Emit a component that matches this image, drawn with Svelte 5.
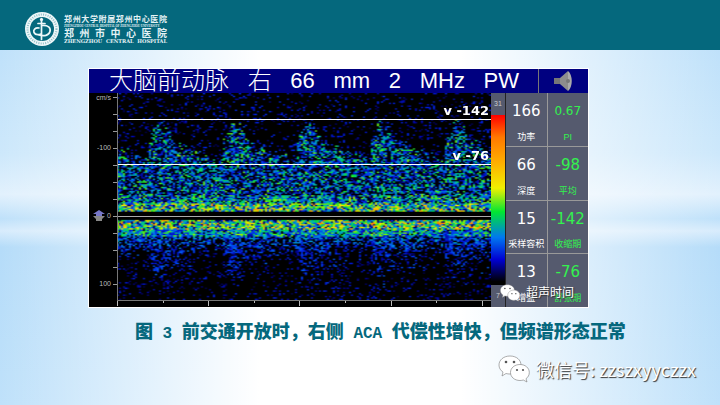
<script>
    import { onMount } from "svelte";

    const readings = [
        { value: "166", label: "功率" },
        { value: "0.67", label: "PI", result: true, small: true },
        { value: "66", label: "深度" },
        { value: "-98", label: "平均", result: true },
        { value: "15", label: "采样容积" },
        { value: "-142", label: "收缩期", result: true },
        { value: "13", label: "增益" },
        { value: "-76", label: "舒张期", result: true }
    ];

    const palette = [
        [0, 0, 0],
        [0, 0, 150],
        [0, 40, 235],
        [0, 115, 235],
        [0, 185, 175],
        [0, 225, 60],
        [150, 240, 0],
        [240, 235, 0],
        [255, 150, 0],
        [255, 40, 0]
    ];

    // samples in the spectrum, one sample is STEP units high
    const COLS = 187;
    const ROWS = 150;
    const STEP = 1.38;
    const PERIOD = 37;

    let canvas;

    function createRandom(seed) {
        return () => {
            seed = (seed * 1664525 + 1013904223) >>> 0;
            return seed / 4294967296;
        };
    }

    // 0..1 height of the pulse wave at a column
    function pulse(col) {
        const t = ((col - 16 + PERIOD) % PERIOD) / PERIOD;
        if (t < 0.07) return 0.6 + t * 5;
        if (t < 0.28) return 1 - Math.abs(t - 0.14) * 1.3;
        if (t < 0.85) return 0.56 - (t - 0.28) * 0.85;
        return 0.06;
    }

    function toColor(level) {
        const l = Math.max(0, Math.min(level, 0.999)) * (palette.length - 1);
        const i = Math.floor(l);
        return palette[i].map((c, k) => c + (palette[i + 1][k] - c) * (l - i));
    }

    function sampleLevel(y, col, random) {
        const wave = pulse(col);
        const r = random();
        const noise = random() < 0.12 ? 0.05 + r * 0.18 : 0;

        if (y > 118.5 && y < 126) return 0;

        if (y < 120) {
            const top = 69 - wave * 37 + (random() - 0.5) * 14;
            if (y < top) return noise;
            if (y > 110) return random() < 0.86 ? 0.2 + r * 0.7 : 0.08;
            if (y > 101) return random() < 0.76 ? 0.1 + r * 0.6 : 0.02;
            return random() < 0.58 ? 0.12 + r * r * r * 0.22 + r * 0.32 : 0.01;
        }

        const depth = y - 126;
        if (depth < 10) return random() < 0.86 ? 0.22 + r * 0.7 : 0.08;
        if (depth < 17 && random() < 0.76) return 0.12 + r * 0.56;
        const reach = 14 + wave * 20;
        const chance = 0.72 * Math.exp(-Math.pow(Math.max(0, depth - 11) / reach, 2));
        if (random() < chance) return 0.09 + r * 0.54 * Math.max(0.42, 1 - depth / 58);
        return noise * 0.9;
    }

    function drawSpectrum() {
        const ctx = canvas.getContext("2d");
        const image = ctx.createImageData(COLS, ROWS);
        const random = createRandom(142);

        for (let row = 0; row < ROWS; row++) {
            let last = 0;
            for (let col = 0; col < COLS; col++) {
                let level = sampleLevel(row * STEP, col, random);
                // neighbouring samples often belong to the same echo
                if (last > 0.1 && level > 0.1 && random() < 0.12) level = last;
                last = level;
                const [r, g, b] = toColor(level);
                const at = (row * COLS + col) * 4;
                image.data[at] = r;
                image.data[at + 1] = g;
                image.data[at + 2] = b;
                image.data[at + 3] = 255;
            }
        }
        ctx.putImageData(image, 0, 0);
    }

    onMount(drawSpectrum);
</script>

{#snippet wechat()}
    <svg class="wechat" viewBox="0 0 32 28" aria-hidden="true">
        <path d="M12 1C5.500 1 1 5 1 10c0 3 1.500 5.500 4 7l-1 4 4-2.500c1.300.4 2.600.5 4 .5 6 0 11-4 11-9S18.500 1 12 1Z" />
        <path d="M22 9.500c-5.500 0-9.500 3.500-9.500 8s4 8 9.500 8c1.200 0 2.300-.2 3.300-.5l3.700 2-1-3.300c2-1.400 3.300-3.600 3.300-6.200 0-4.500-4-8-9.300-8Z" />
        <g class="eyes">
            <circle cx="8" cy="7" r="1.300" />
            <circle cx="16" cy="7" r="1.300" />
            <circle cx="19" cy="15" r="1.100" />
            <circle cx="25" cy="15" r="1.100" />
        </g>
    </svg>
{/snippet}

<div class="slide">
    <header>
        <svg class="emblem" viewBox="0 0 36 36" aria-hidden="true">
            <circle cx="18" cy="18" r="17" fill="#eef7f9" />
            <circle cx="18" cy="18" r="14.500" fill="none" stroke="#05687d" stroke-width="2" stroke-dasharray="1 1.300" opacity=".4" />
            <circle cx="18" cy="18" r="12" fill="#05687d" />
            <g fill="none" stroke="#eef7f9" stroke-width="1.700" stroke-linecap="round">
                <path d="M17.500 7.500v21M14 12.500h7" />
                <path d="M18 14.500c6-.5 9 2 8 6-1 4-6 5-11 3.500" />
                <path d="M15 17c-4-.5-6 2-5 4.500 1 2 4 2.500 7 1.500" />
            </g>
            <circle cx="17.500" cy="8.500" r="1.600" fill="#eef7f9" />
        </svg>
        <div class="names">
            <strong class="university">
                {#each "郑州大学附属郑州中心医院" as char}<span>{char}</span>{/each}
            </strong>
            <span class="latin tiny">ZHENGZHOU CENTRAL HOSPITAL OF ZHENGZHOU UNIVERSITY</span>
            <strong class="hospital">
                {#each "郑州市中心医院" as char}<span>{char}</span>{/each}
            </strong>
            <span class="latin"><span>ZHENGZHOU</span><span>CENTRAL</span><span>HOSPITAL</span></span>
        </div>
    </header>

    <main>
        <figure>
            <div class="monitor">
                <div class="title">
                    <h1><span class="vessel">大脑前动脉</span><span class="vessel">右</span><span>66</span><span>mm</span><span>2</span><span>MHz</span><span>PW</span></h1>
                    <button aria-label="声音">
                        <svg viewBox="0 0 22 22" aria-hidden="true">
                            <path d="M1 8h6v6H1Z" fill="#777" />
                            <path d="M7 8 15 1v20L7 14Z" fill="#8d8d8d" />
                            <path d="M15 1c5 4 5 16 0 20Z" fill="#aaa" />
                            <circle cx="15" cy="11" r="2" fill="#777" />
                        </svg>
                    </button>
                </div>

                <div class="scan">
                    <div class="scale">
                        <span>cm/s</span>
                        <span>-100</span>
                        <span class="zero">
                            <svg viewBox="0 0 12 12" aria-hidden="true">
                                <path d="M6 0 12 4H9v2H3V4H0Z" fill="#7777c8" />
                                <path d="M0 6h12L9 9v2H3V9Z" fill="#888" />
                            </svg>0
                        </span>
                        <span>100</span>
                    </div>

                    <div class="plot">
                        <canvas bind:this={canvas} width={COLS} height={ROWS}></canvas>
                        <svg class="axes" viewBox="0 0 374 214" preserveAspectRatio="none" aria-hidden="true">
                            <path d="M0 26.500h374M0 71.500h374" stroke="#fff" />
                            <path d="M0 123.500h374" stroke="#aaa" />
                            <path d="M.5 0v208M0 207.500h374" stroke="#777" />
                            {#each [0, 91, 182, 274, 365] as x}
                                <path d="M{x + 0.5} 208v5" stroke="#bbb" />
                            {/each}
                            {#each [46, 137, 228, 319] as x}
                                <path d="M{x + 0.5} 208v2" stroke="#bbb" />
                            {/each}
                        </svg>
                        <span class="marker systolic">v -142</span>
                        <span class="marker diastolic">v -76</span>
                    </div>

                    <div class="colors">
                        <span>31</span>
                        <div class="ramp"></div>
                        <span>7</span>
                    </div>

                    <dl>
                        {#each readings as reading}
                            <div class="reading" class:result={reading.result} class:small={reading.small}>
                                <dd>{reading.value}</dd>
                                <dt>{reading.label}</dt>
                            </div>
                        {/each}
                    </dl>
                </div>

                <div class="stamp">{@render wechat()}<span>超声时间</span></div>
            </div>
            <figcaption><b>图</b> 3 <b>前交通开放时，右侧</b> ACA <b>代偿性增快，但频谱形态正常</b></figcaption>
        </figure>
    </main>

    <footer>{@render wechat()}<span>微信号: zzszxyyczzx</span></footer>
</div>

<style>
:global(body) {
    margin: 0;
}

.slide {
    min-height: 100vh;
    display: flex;
    flex-direction: column;
    font-family: "Liberation Sans", "Noto Sans CJK SC", sans-serif;
    background:
        linear-gradient(90deg, transparent, #fff 36%, #fff 64%, transparent),
        linear-gradient(#bfe1fa 12%, #cde8fb 38%, #e2f1fd 48%, #bfe1fa 54%, #d8ecfc 57%, #b5dcf9 61%, #bfe1fa);
}

header {
    display: flex;
    align-items: center;
    gap: 4px;
    height: 50px;
    padding: 7px 24px 0;
    box-sizing: border-box;
    color: #e4f2f5;
    background: #05687d;
}

.emblem {
    width: 36px;
    height: 36px;
}

.names {
    display: flex;
    flex-direction: column;
    width: 103px;
}

.names strong {
    display: flex;
    justify-content: space-between;
    font-family: "Noto Sans CJK SC", sans-serif;
    line-height: 10px;
    white-space: nowrap;
}

.university {
    font-size: 8px;
}

.hospital {
    font-size: 10px;
}

.latin {
    display: flex;
    justify-content: space-between;
    font: bold 5px/6px "DejaVu Serif", serif;
    white-space: nowrap;
}

.latin.tiny {
    font: bold 3px/4px "Liberation Serif", serif;
}

main {
    padding: 18px 131px 0 88px;
}

figure {
    margin: 0;
}

.monitor {
    position: relative;
    border: 1px solid #fff;
    background: #000;
}

.title {
    display: flex;
    height: 24px;
    color: #fff;
    background: #000080;
}

h1 {
    flex: 1;
    display: flex;
    justify-content: space-between;
    margin: 0;
    padding: 0 19px 0 20px;
    font: 22px/24px "Liberation Sans", "Noto Sans CJK SC", sans-serif;
    white-space: nowrap;
}

.vessel {
    font-size: 24px;
    font-weight: 300;
}

.title button {
    width: 50px;
    padding: 0;
    border: 0;
    border-left: 1px solid #777;
    background: none;
}

.title svg {
    display: block;
    width: 22px;
    height: 22px;
    margin: 0 auto;
}

.scan {
    display: flex;
    height: 214px;
}

.scale {
    width: 28px;
    display: grid;
    grid-template-rows: 10px 50px 68px 68px;
    align-items: end;
    box-sizing: border-box;
    padding-right: 6px;
    font-size: 7px;
    line-height: 10px;
    text-align: right;
    color: #bbb;
    background: repeating-linear-gradient(#999 0 1px, transparent 1px 17px) right 4px / 4px 188px no-repeat;
}

.zero {
    display: flex;
    align-items: center;
    justify-content: flex-end;
    gap: 2px;
    height: 10px;
}

.zero svg {
    flex: none;
    width: 12px;
    height: 12px;
}

.plot {
    position: relative;
    flex: 1;
    min-width: 0;
}

canvas {
    display: block;
    width: 100%;
    height: 207px;
}

.axes {
    position: absolute;
    inset: 0;
    width: 100%;
    height: 100%;
    fill: none;
}

.marker {
    position: absolute;
    right: 2px;
    font: bold 13px/14px "DejaVu Sans", sans-serif;
    color: #fff;
}

.systolic {
    top: 11px;
}

.diastolic {
    top: 56px;
}

.colors {
    width: 14px;
    display: flex;
    flex-direction: column;
    font-size: 7px;
    line-height: 22px;
    text-align: center;
    color: #ccc;
    background: #555a6e;
}

.ramp {
    flex: 1;
    background: linear-gradient(#f00, #ff7800 13%, #ffaf00 28%, #f0f000 43%, #00e632 57%, #0078f0 72%, #0000d2 85%, #000 98%);
}

dl {
    width: 83px;
    display: grid;
    grid-template-columns: 1fr 1fr;
    grid-template-rows: repeat(4, 1fr);
    gap: 1px;
    margin: 0;
    border-left: 1px solid #222;
    box-sizing: border-box;
    background: #999;
}

.reading {
    display: flex;
    flex-direction: column;
    justify-content: space-between;
    align-items: center;
    padding: 8px 0 3px;
    color: #fff;
    background: #555a6e;
}

.reading.result {
    color: #33f24e;
}

.reading dd {
    margin: 0;
    font: 15px/20px "DejaVu Sans", sans-serif;
}

.reading.small dd {
    font-size: 12px;
}

.reading dt {
    font-size: 9px;
    line-height: 12px;
    white-space: nowrap;
}

.wechat {
    fill: #fff;
    stroke: #777;
    stroke-width: 0.6;
}

.eyes {
    fill: #555;
    stroke: none;
}

.stamp {
    position: absolute;
    right: 14px;
    bottom: 5px;
    display: flex;
    align-items: center;
    gap: 5px;
    font-size: 12px;
    line-height: 18px;
    color: #fff;
    text-shadow: 1px 1px 1px #333;
}

.stamp .wechat {
    width: 22px;
    height: 18px;
}

figcaption {
    padding: 10px 0 0 47px;
    font: bold 16px/24px "Liberation Mono", monospace;
    white-space: nowrap;
    color: #05687d;
}

figcaption b {
    font-family: "Noto Sans CJK SC", sans-serif;
    font-size: 18px;
}

footer {
    display: flex;
    justify-content: flex-end;
    align-items: center;
    gap: 6px;
    padding: 9px 24px 0 0;
    font: 18px/28px "Noto Sans CJK SC", sans-serif;
    color: #fff;
    text-shadow: 1px 1px 1px #333;
}

footer .wechat {
    width: 32px;
    height: 28px;
}
</style>
